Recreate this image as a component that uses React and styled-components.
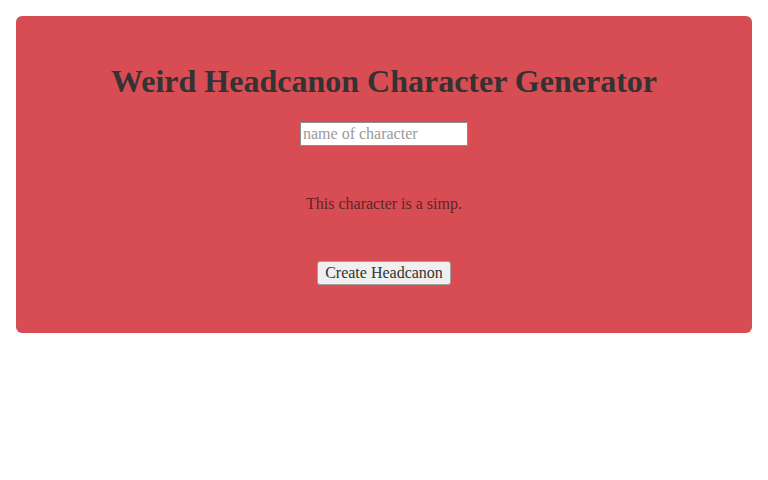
import styled, { createGlobalStyle } from 'styled-components';

const GlobalStyle = createGlobalStyle`
  body {
    margin: 0;
    background: #fff;
    font-family: "Liberation Serif", "Times New Roman", serif;
  }
`;

const Panel = styled.div`
  margin: 16px;
  padding: 20px 20px 48px;
  background-color: #d84c53;
  border-radius: 6px;
  text-align: center;
`;
const Title = styled.h1`
  margin: 27px 0 22px;
  font-size: 32px;
  color: #333;
`;
const NameInput = styled.input`
  width: 162px;
  height: 20px;
  padding: 1px 2px;
  border: 1px solid #8d8d8d;
  font-family: inherit;
  font-size: 16px;
  color: #222;
  &::placeholder {
    color: #9a9a9a;
  }
`;
const Result = styled.p`
  margin: 49px 0 0;
  font-size: 16px;
  line-height: 18px;
  color: #5e2629;
`;
const CreateButton = styled.button`
  margin-top: 48px;
  padding: 1px 7px;
  height: 24px;
  font-family: inherit;
  font-size: 16px;
  color: #333;
  background: #efefef;
  border: 1px solid #a0a0a0;
  border-radius: 3px;
`;

export default function App() {
  return (
    <>
      <GlobalStyle />
      <Panel>
        <Title>Weird Headcanon Character Generator</Title>
        <NameInput type="text" placeholder="name of character" />
        <Result>This character is a simp.</Result>
        <CreateButton>Create Headcanon</CreateButton>
      </Panel>
    </>
  );
}
